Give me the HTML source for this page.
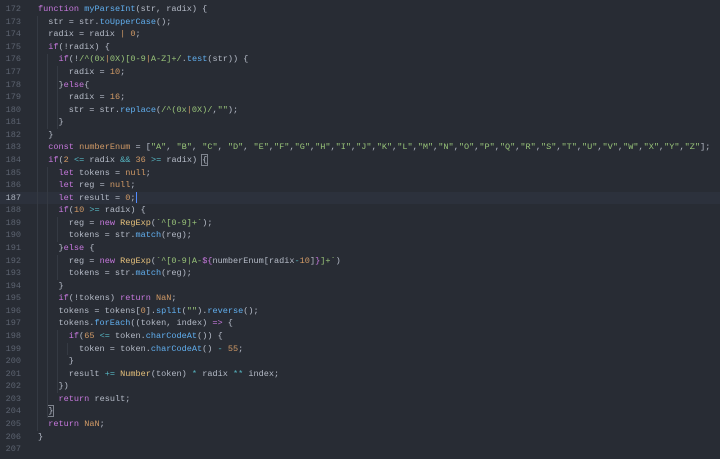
<!DOCTYPE html>
<html><head><meta charset="utf-8"><style>
body{margin:0;width:720px;height:459px;background:#282c34;overflow:hidden}
.l{position:absolute;left:0;width:720px;height:12.57px;font:8.55px/12.57px "Liberation Mono",monospace;color:#b4bac6;white-space:pre}
.n{position:absolute;left:0;width:21px;text-align:right;color:#5c6370}
.c{position:absolute;left:38px}
.cur{background:#2c313c}
.cur .n{color:#abb2bf}
.k{color:#c678dd}.f{color:#61afef}.o{color:#d19a66}.s{color:#98c379}.y{color:#e5c07b}.p{color:#56b6c2}.r{color:#e06c75}
.g{position:absolute;width:1px;background:#353a43}
.b{outline:1px solid #7f848e}
.caret{display:inline-block;width:1px;height:11px;background:#528bff;vertical-align:middle}
</style></head><body>
<div id="w"></div>
<script>
const L=[
'<span class="k">function</span> <span class="f">myParseInt</span>(str, radix) {',
'  str = str.<span class="f">toUpperCase</span>();',
'  radix = radix <span class="o">|</span> <span class="o">0</span>;',
'  <span class="k">if</span>(!radix) {',
'    <span class="k">if</span>(!<span class="s">/^(0x<span class="o">|</span>0X)[0-9<span class="o">|</span>A-Z]+/</span>.<span class="f">test</span>(str)) {',
'      radix = <span class="o">10</span>;',
'    }<span class="k">else</span>{',
'      radix = <span class="o">16</span>;',
'      str = str.<span class="f">replace</span>(<span class="s">/^(0x<span class="o">|</span>0X)/</span>,<span class="s">""</span>);',
'    }',
'  }',
'  <span class="k">const</span> <span class="o">numberEnum</span> = [<span class="s">"A"</span>, <span class="s">"B"</span>, <span class="s">"C"</span>, <span class="s">"D"</span>, <span class="s">"E"</span>,<span class="s">"F"</span>,<span class="s">"G"</span>,<span class="s">"H"</span>,<span class="s">"I"</span>,<span class="s">"J"</span>,<span class="s">"K"</span>,<span class="s">"L"</span>,<span class="s">"M"</span>,<span class="s">"N"</span>,<span class="s">"O"</span>,<span class="s">"P"</span>,<span class="s">"Q"</span>,<span class="s">"R"</span>,<span class="s">"S"</span>,<span class="s">"T"</span>,<span class="s">"U"</span>,<span class="s">"V"</span>,<span class="s">"W"</span>,<span class="s">"X"</span>,<span class="s">"Y"</span>,<span class="s">"Z"</span>];',
'  <span class="k">if</span>(<span class="o">2</span> <span class="p">&lt;=</span> radix <span class="p">&amp;&amp;</span> <span class="o">36</span> <span class="p">&gt;=</span> radix) <span class="b">{</span>',
'    <span class="k">let</span> tokens = <span class="o">null</span>;',
'    <span class="k">let</span> reg = <span class="o">null</span>;',
'    <span class="k">let</span> result = <span class="o">0</span>;<span class="caret"></span>',
'    <span class="k">if</span>(<span class="o">10</span> <span class="p">&gt;=</span> radix) {',
'      reg = <span class="k">new</span> <span class="y">RegExp</span>(<span class="s">`^[0-9]+`</span>);',
'      tokens = str.<span class="f">match</span>(reg);',
'    }<span class="k">else</span> {',
'      reg = <span class="k">new</span> <span class="y">RegExp</span>(<span class="s">`^[0-9|A-<span class="k">${</span></span>numberEnum[radix<span class="p">-</span><span class="o">10</span>]<span class="k">}</span><span class="s">]+`</span>)',
'      tokens = str.<span class="f">match</span>(reg);',
'    }',
'    <span class="k">if</span>(!tokens) <span class="k">return</span> <span class="o">NaN</span>;',
'    tokens = tokens[<span class="o">0</span>].<span class="f">split</span>(<span class="s">""</span>).<span class="f">reverse</span>();',
'    tokens.<span class="f">forEach</span>((token, index) <span class="k">=&gt;</span> {',
'      <span class="k">if</span>(<span class="o">65</span> <span class="p">&lt;=</span> token.<span class="f">charCodeAt</span>()) {',
'        token = token.<span class="f">charCodeAt</span>() <span class="p">-</span> <span class="o">55</span>;',
'      }',
'      result <span class="p">+=</span> <span class="y">Number</span>(token) <span class="p">*</span> radix <span class="p">**</span> index;',
'    })',
'    <span class="k">return</span> result;',
'  <span class="b">}</span>',
'  <span class="k">return</span> <span class="o">NaN</span>;',
'}',
''];
let h='';const lh=12.57,t0=3.2;
L.forEach((s,i)=>{h+=`<div class="l${i==15?' cur':''}" style="top:${(t0+i*lh).toFixed(2)}px"><span class="n">${172+i}</span><span class="c">${s}</span></div>`;});
const G=[[38,1,33],[48,4,9],[58,5,9],[48,13,32],[58,17,18],[58,20,21],[58,26,30],[68,27,27]];
G.forEach(([x,a,b])=>{h+=`<div class="g" style="left:${x-1}px;top:${(t0+a*lh).toFixed(1)}px;height:${((b-a+1)*lh).toFixed(1)}px"></div>`;});
document.getElementById('w').innerHTML=h;
</script>
</body></html>
